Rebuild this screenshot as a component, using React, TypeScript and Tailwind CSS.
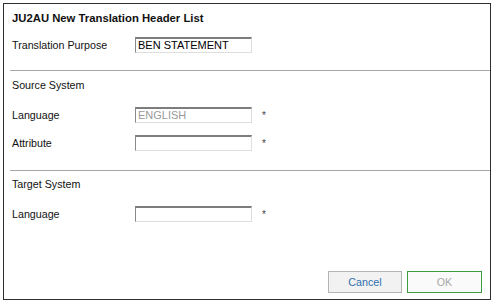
import type { ReactNode } from "react";

function Field({ value, muted }: { value?: string; muted?: boolean }) {
    return (
        <div
            className={`flex h-[16px] w-[117px] items-center border-t-2 border-l border-r border-b border-t-[#7d7d7d] border-l-[#8a8a8a] border-r-[#dedede] border-b-[#dedede] bg-white pl-[2px] text-[11px] leading-none ${
                muted ? "text-[#9a9a9a]" : "text-black"
            }`}
        >
            {value}
        </div>
    );
}

function Row({ label, children, required }: { label: string; children: ReactNode; required?: boolean }) {
    return (
        <div className="flex h-[16px] items-center pl-[8px]">
            <span className="w-[123px] text-[10.7px] text-[#111]">{label}</span>
            {children}
            {required && <span className="ml-[10px] text-[10px] text-[#444]">*</span>}
        </div>
    );
}

export default function App() {
    return (
        <div className="bg-white p-[3px] font-['Liberation_Sans',Arial,sans-serif]">
            <div className="flex h-[297px] w-[488px] flex-col border border-[#2f2f2f]">
                {/* Title */}
                <div className="flex h-[28px] items-center pl-[8px] text-[11.3px] font-bold text-[#111]">
                    JU2AU New Translation Header List
                </div>

                <div className="mt-[5px]">
                    <Row label="Translation Purpose">
                        <Field value="BEN STATEMENT" />
                    </Row>
                </div>

                <div className="mt-[17px] ml-[6px] h-px bg-[#a6a6a6]" />

                {/* Source System */}
                <div className="flex h-[28px] items-center pl-[8px] text-[10.7px] text-[#111]">Source System</div>
                <div className="mt-[8px]">
                    <Row label="Language" required>
                        <Field value="ENGLISH" muted />
                    </Row>
                </div>
                <div className="mt-[12px]">
                    <Row label="Attribute" required>
                        <Field />
                    </Row>
                </div>

                <div className="mt-[19px] ml-[6px] h-px bg-[#a6a6a6]" />

                {/* Target System */}
                <div className="flex h-[26px] items-center pl-[8px] text-[10.7px] text-[#111]">Target System</div>
                <div className="mt-[9px]">
                    <Row label="Language" required>
                        <Field />
                    </Row>
                </div>

                {/* Buttons */}
                <div className="flex flex-1 items-end justify-end gap-[5px] pr-[8px] pb-[6px]">
                    <button className="h-[22px] w-[74px] border border-[#b4b4b4] bg-[#f2f2f2] text-[10.7px] text-[#2f6fb0]">
                        Cancel
                    </button>
                    <button className="h-[22px] w-[75px] border border-[#3e9a3e] bg-[#fafafa] text-[10.7px] text-[#a8a8a8]">
                        OK
                    </button>
                </div>
            </div>
        </div>
    );
}
